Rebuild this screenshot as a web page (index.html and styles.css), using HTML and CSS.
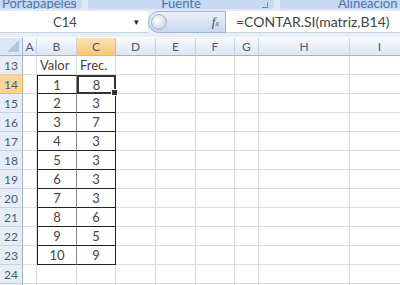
FILE: index.html
```html
<!DOCTYPE html>
<html lang="es">
<head>
    <meta charset="UTF-8">
    <title>CONTAR.SI</title>
    <link rel="stylesheet" href="styles.css">
</head>
<body>
    <div class="ribbon">
        <div class="group g-clip"><span>Portapapeles</span><i class="launch"></i></div>
        <div class="group g-font"><span>Fuente</span><i class="launch"></i></div>
        <div class="group g-align"><span>Alineación</span></div>
    </div>

    <div class="formula-bar">
        <div class="name-box">
            <span class="name">C14</span>
            <span class="drop">&#9662;</span>
        </div>
        <div class="fx-pill">
            <span class="knob"></span>
            <span class="fx"><i>f</i><small>x</small></span>
        </div>
        <div class="formula">=CONTAR.SI(matriz,B14)</div>
    </div>

    <div class="sheet" id="sheet"></div>

    <script>
        const cols = ['A', 'B', 'C', 'D', 'E', 'F', 'G', 'H', 'I'];
        const data = [[1, 8], [2, 3], [3, 7], [4, 3], [5, 3], [6, 3], [7, 3], [8, 6], [9, 5], [10, 9]];
        const sheet = document.getElementById('sheet');

        function cell(cls, text) {
            const div = document.createElement('div');
            div.className = cls;
            if (text !== undefined) div.textContent = text;
            sheet.appendChild(div);
            return div;
        }

        // header row
        cell('corner');
        cols.forEach(c => cell('col-head' + (c === 'C' ? ' sel' : ''), c));

        // rows 13..25 (25 only peeks in at the bottom)
        for (let r = 13; r <= 25; r++) {
            cell('row-head' + (r === 14 ? ' sel' : ''), r);
            cols.forEach(c => {
                let cls = 'cell';
                let text = '';
                if (r === 13 && c === 'B') text = 'Valor';
                if (r === 13 && c === 'C') text = 'Frec.';
                const i = r - 14;
                if (i >= 0 && i < data.length && (c === 'B' || c === 'C')) {
                    text = data[i][c === 'B' ? 0 : 1];
                    cls += ' num box box-' + c.toLowerCase();
                    if (i === 0) cls += ' box-top';
                }
                if (r === 14 && c === 'C') cls += ' active';
                cell(cls, text);
            });
        }
    </script>
</body>
</html>
```

FILE: styles.css
```css
* {
    box-sizing: border-box;
}
html, body {
    margin: 0;
    width: 400px;
    height: 285px;
    overflow: hidden;
    background: #fff;
    font-family: Lato, 'Open Sans', sans-serif;
}
.ribbon {
    display: flex;
    gap: 6px;
    height: 11px;
    padding-bottom: 2px;
    background: #dfe8f4;
}
.group {
    display: flex;
    align-items: flex-end;
    justify-content: center;
    position: relative;
    height: 9px;
    overflow: hidden;
    background: #c6d9f0;
    border-radius: 0 0 3px 3px;
    color: #4a74b0;
    font-size: 13px;
}
.group span {
    line-height: 13px;
    margin-bottom: -1px;
}
.g-clip {
    width: 82px;
    justify-content: flex-start;
    padding-left: 2px;
}
.g-font {
    width: 186px;
}
.g-align {
    flex: 1;
    padding-left: 58px;
    justify-content: flex-start;
}
.launch {
    position: absolute;
    right: 6px;
    bottom: 1px;
    width: 6px;
    height: 6px;
    border-right: 1px solid #6a8bbb;
    border-bottom: 1px solid #6a8bbb;
}
.formula-bar {
    display: flex;
    height: 26px;
    padding-bottom: 4px;
    background: #e7eef7;
}
.name-box {
    display: flex;
    align-items: center;
    width: 148px;
    background: #fff;
    border-bottom: 1px solid #c5d2e3;
}
.name {
    flex: 1;
    text-align: center;
    font-size: 13px;
    color: #444;
    padding-right: 4px;
}
.drop {
    width: 14px;
    font-size: 9px;
    color: #222;
}
.fx-pill {
    display: flex;
    align-items: center;
    justify-content: space-between;
    width: 78px;
    padding: 0 6px 0 2px;
    background: linear-gradient(#e9f0f9, #c9d9ee);
    border: 1px solid #9fb6d4;
    border-radius: 11px 0 0 11px;
}
.knob {
    width: 16px;
    height: 16px;
    border-radius: 50%;
    background: radial-gradient(circle at 40% 40%, #fff 0, #e4eaf2 40%, #b8c4d3 100%);
    border: 1px solid #a9b7c9;
}
.fx {
    font-family: 'Liberation Serif', serif;
    color: #3a4a66;
    font-size: 13px;
}
.fx small {
    font-size: 8px;
    font-style: italic;
}
.formula {
    flex: 1;
    padding-left: 10px;
    background: #fff;
    border-bottom: 1px solid #c5d2e3;
    font-size: 14px;
    line-height: 21px;
    color: #444;
}
.sheet {
    display: grid;
    grid-template-columns: 23px 14px 40px 39px 40px 40px 39px 24px 91px 60px;
    grid-template-rows: 18px;
    grid-auto-rows: 19px;
    margin-top: 1px;
    font-size: 13px;
    color: #444;
}
.corner {
    background: #dde7f4;
    border-right: 1px solid #9eb6ce;
    border-bottom: 1px solid #9eb6ce;
    position: relative;
}
.corner::after {
    content: '';
    position: absolute;
    right: 3px;
    bottom: 3px;
    border-style: solid;
    border-width: 0 0 12px 12px;
    border-color: transparent transparent #b4c6dc transparent;
}
.col-head {
    text-align: center;
    line-height: 18px;
    font-size: 12px;
    color: #4a5b77;
    background: linear-gradient(#f6f8fc, #dfe6f2);
    border-right: 1px solid #c4d2e4;
    border-bottom: 1px solid #9eb6ce;
}
.col-head.sel {
    background: linear-gradient(#fbe3b4, #f6c877);
    border-right-color: #f2b84f;
    border-bottom-color: #f2b84f;
}
.row-head {
    text-align: center;
    line-height: 19px;
    font-size: 12px;
    color: #4a5b77;
    background: #e6edf7;
    border-right: 1px solid #9eb6ce;
    border-bottom: 1px solid #c4d2e4;
}
.row-head.sel {
    background: #f8d49a;
    border-color: #f2b84f;
}
.cell {
    border-right: 1px solid #dadcdd;
    border-bottom: 1px solid #dadcdd;
    line-height: 19px;
    padding-left: 3px;
    white-space: nowrap;
}
.num {
    text-align: center;
    padding-left: 0;
}
.box {
    border-bottom-color: #222;
}
.box-top {
    border-top: 1px solid #222;
    line-height: 17px;
}
.box-b {
    border-left: 1px solid #222;
    border-right-color: #888;
    line-height: 18px;
}
.box-c {
    border-right-color: #222;
}
.active {
    position: relative;
    border: 2px solid #333;
}
.active::after {
    content: '';
    position: absolute;
    right: -4px;
    bottom: -4px;
    width: 5px;
    height: 5px;
    background: #333;
    border: 1px solid #fff;
}
```
